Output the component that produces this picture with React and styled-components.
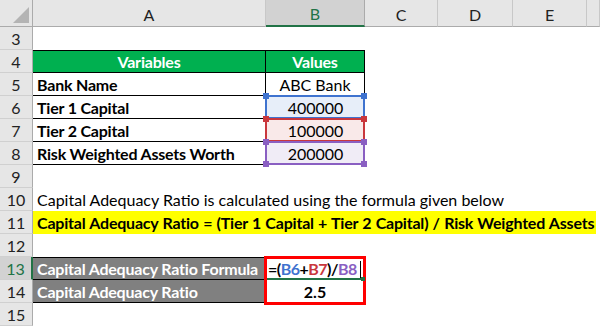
import styled, { createGlobalStyle } from "styled-components";

const Global = createGlobalStyle`
  * { box-sizing: border-box; }
  body {
    margin: 0;
    background: #fff;
    font-family: Lato, "Liberation Sans", sans-serif;
    font-size: 16px;
    color: #000;
  }
`;

const Sheet = styled.div`
  display: grid;
  grid-template-columns: 33px 233px 99px 73px 75px 74px 13px;
  grid-template-rows: 27px repeat(13, 23px);
  width: 600px;
  height: 326px;
  overflow: hidden;
`;

const Corner = styled.div`
  background: #e6e6e6;
  border-right: 1px solid #ababab;
  border-bottom: 1px solid #ababab;
  display: flex;
  align-items: flex-end;
  justify-content: flex-end;
  padding: 0 3px 3px 0;
`;

const ColHead = styled.div`
  background: ${(p) => (p.$active ? "#d2d2d2" : "#e6e6e6")};
  color: ${(p) => (p.$active ? "#217346" : "#222")};
  border-right: 1px solid ${(p) => (p.$active ? "#ababab" : "#c8c8c8")};
  border-bottom: ${(p) => (p.$active ? "2px solid #217346" : "1px solid #ababab")};
  display: flex;
  align-items: center;
  justify-content: center;
  padding-top: 2px;
`;

const RowHead = styled.div`
  grid-column: 1;
  background: ${(p) => (p.$active ? "#d2d2d2" : "#e6e6e6")};
  color: ${(p) => (p.$active ? "#217346" : "#222")};
  border-right: ${(p) => (p.$active ? "2px solid #217346" : "1px solid #ababab")};
  border-bottom: 1px solid #d0d0d0;
  display: flex;
  align-items: center;
  justify-content: center;
`;

const Cell = styled.div`
  position: relative;
  grid-column: ${(p) => p.$col} / span ${(p) => p.$span || 1};
  display: flex;
  align-items: center;
  justify-content: ${(p) => (p.$center ? "center" : "flex-start")};
  padding: 0 4px;
  white-space: nowrap;
  font-weight: ${(p) => (p.$bold ? 700 : 400)};
  letter-spacing: ${(p) => (p.$bold ? "-0.2px" : "0")};
  word-spacing: ${(p) => p.$words || 0}px;
  background: ${(p) => p.$bg || "transparent"};
  color: ${(p) => p.$color || "#000"};
  border-top: ${(p) => (p.$top ? "1px solid #000" : "0")};
  border-bottom: ${(p) => (p.$bottom ? "1px solid #000" : "0")};
  border-right: ${(p) => (p.$right ? "1px solid #000" : "0")};
  margin-right: ${(p) => p.$trim || 0}px;
`;

const Frame = styled.div`
  position: absolute;
  inset: -1px 0 0 -1px;
  border: 2px solid ${(p) => p.$c};
  background: ${(p) => p.$fill};
  z-index: 0;
`;

const Handle = styled.span`
  position: absolute;
  width: 6px;
  height: 6px;
  background: ${(p) => p.$c};
  ${(p) => (p.$bottom ? "bottom: -4px;" : "top: -4px;")}
  ${(p) => (p.$right ? "right: -4px;" : "left: -4px;")}
`;

const Value = styled.span`
  position: relative;
  z-index: 1;
`;

const RedBox = styled.div`
  grid-column: 3;
  grid-row: 12 / span 2;
  margin: -1px -1px -2px -2px;
  border: 3px solid #ff0000;
  display: flex;
  flex-direction: column;
  position: relative;
  z-index: 2;
`;

const Active = styled.div`
  height: 21px;
  line-height: 19px;
  padding-left: 1px;
  font-weight: 700;
  letter-spacing: -0.5px;
  white-space: nowrap;
  border-bottom: 2px solid #217346;
  margin-right: 2px;
  position: relative;
`;

const FillHandle = styled.span`
  position: absolute;
  right: -4px;
  bottom: -3px;
  width: 4px;
  height: 4px;
  background: #217346;
`;

const Caret = styled.span`
  display: inline-block;
  width: 1px;
  height: 17px;
  background: #000;
  margin-left: 3px;
  vertical-align: -3px;
`;

const Ref = styled.span`
  color: ${(p) => p.$c};
`;

const Result = styled.div`
  flex: 1;
  display: flex;
  align-items: center;
  justify-content: center;
  font-weight: 700;
`;

const BLUE = "#3f73cf";
const RED = "#c9373d";
const PURPLE = "#8a5fc2";

function RefCell({ c, fill, children, last }) {
  return (
    <Cell $col={3} $center>
      <Frame $c={c} $fill={fill}>
        <Handle $c={c} />
        <Handle $c={c} $right />
        {last && <Handle $c={c} $bottom />}
        {last && <Handle $c={c} $bottom $right />}
      </Frame>
      <Value>{children}</Value>
    </Cell>
  );
}

const cols = ["A", "B", "C", "D", "E", ""];
const tableRows = [
  ["Tier 1 Capital", "400000", BLUE, "#e7eef9"],
  ["Tier 2 Capital", "100000", RED, "#f9e9e9"],
  ["Risk Weighted Assets Worth", "200000", PURPLE, "#f0ecf6"],
];

export default function App() {
  return (
    <>
      <Global />
      <Sheet>
        <Corner>
          <svg width="16" height="16" viewBox="0 0 16 16">
            <polygon points="16,0 16,16 0,16" fill="#b4b4b4" />
          </svg>
        </Corner>
        {cols.map((c, i) => (
          <ColHead key={i} $active={c === "B"}>{c}</ColHead>
        ))}

        <RowHead>3</RowHead>

        <RowHead>4</RowHead>
        <Cell $col={2} $center $bold $bg="#00b050" $color="#fff" $top $bottom $right>Variables</Cell>
        <Cell $col={3} $center $bold $bg="#00b050" $color="#fff" $top $bottom $right>Values</Cell>

        <RowHead>5</RowHead>
        <Cell $col={2} $bold $bottom $right>Bank Name</Cell>
        <Cell $col={3} $center $right>ABC Bank</Cell>

        {tableRows.flatMap(([label, val, c, fill], i) => [
          <RowHead key={"h" + i}>{6 + i}</RowHead>,
          <Cell key={"a" + i} $col={2} $bold $bottom $right>{label}</Cell>,
          <RefCell key={"b" + i} c={c} fill={fill} last={i === 2}>{val}</RefCell>,
        ])}

        <RowHead>9</RowHead>

        <RowHead>10</RowHead>
        <Cell $col={2} $span={6}>Capital Adequacy Ratio is calculated using the formula given below</Cell>

        <RowHead>11</RowHead>
        <Cell $col={2} $span={6} $bold $bg="#ffff00" $trim={4} $words={0.6}>
          Capital Adequacy Ratio = (Tier 1 Capital + Tier 2 Capital) / Risk Weighted Assets
        </Cell>

        <RowHead>12</RowHead>

        <RowHead $active>13</RowHead>
        <Cell $col={2} $bold $bg="#808080" $color="#fff" $top $bottom>Capital Adequacy Ratio Formula</Cell>
        <RedBox>
          <Active>
            =(<Ref $c={BLUE}>B6</Ref>+<Ref $c={RED}>B7</Ref>)/<Ref $c={PURPLE}>B8</Ref>
            <Caret />
            <FillHandle />
          </Active>
          <Result>2.5</Result>
        </RedBox>

        <RowHead>14</RowHead>
        <Cell $col={2} $bold $bg="#808080" $color="#fff" $bottom>Capital Adequacy Ratio</Cell>

        <RowHead>15</RowHead>
      </Sheet>
    </>
  );
}
